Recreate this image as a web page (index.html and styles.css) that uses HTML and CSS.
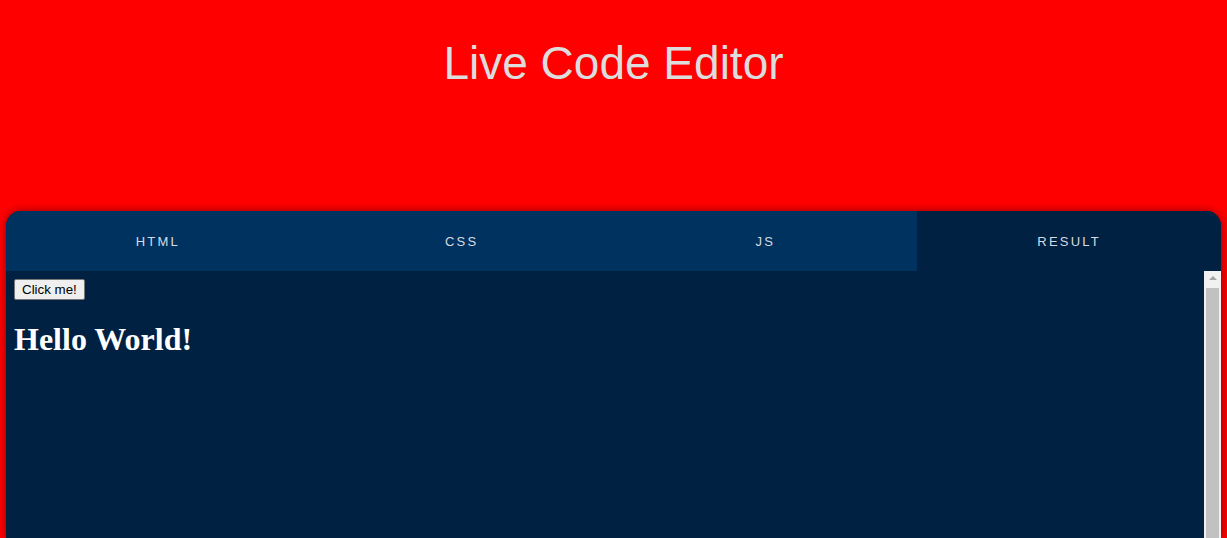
FILE: index.html
```html
<!DOCTYPE html>
<html lang="en">
<head>
<meta charset="utf-8">
<title>Live Code Editor</title>
<link rel="stylesheet" href="styles.css">
</head>
<body>
<header class="header">
  <h1 class="title">Live Code Editor</h1>
</header>
<main class="editor">
  <nav class="tabs">
    <div class="tab">HTML</div>
    <div class="tab">CSS</div>
    <div class="tab">JS</div>
    <div class="tab tab-active">RESULT</div>
  </nav>
  <section class="result">
    <div class="result-page">
      <button class="demo-btn" type="button">Click me!</button>
      <h1 class="hello">Hello World!</h1>
    </div>
    <div class="scrollbar">
      <div class="scroll-arrow"></div>
      <div class="scroll-thumb"></div>
    </div>
  </section>
</main>
</body>
</html>
```
FILE: styles.css
```css
html {
  overflow: hidden;
}
body {
  margin: 0;
  background: #ff0000;
  font-family: "Liberation Sans", Arial, sans-serif;
}
.header {
  height: 211px;
  text-align: center;
}
.title {
  margin: 0;
  padding-top: 37px;
  font-size: 46px;
  font-weight: 400;
  color: #dddddd;
  line-height: 53px;
}
.editor {
  margin: 0 6px;
  border-radius: 15px 15px 0 0;
  overflow: hidden;
  background: #002142;
  box-shadow: 0 0 8px rgba(0, 0, 0, 0.45);
}
.tabs {
  display: flex;
  height: 60px;
  background: #00325f;
}
.tab {
  flex: 1;
  display: flex;
  align-items: center;
  justify-content: center;
  font-size: 13px;
  letter-spacing: 2.2px;
  color: #d6dbe2;
}
.tab-active {
  background: #002142;
}
.result {
  display: flex;
  height: 267px;
  background: #002142;
}
.result-page {
  flex: 1;
  padding: 8px;
  font-family: "Liberation Serif", "Times New Roman", serif;
  color: #ffffff;
}
.demo-btn {
  font-family: "Liberation Sans", Arial, sans-serif;
  font-size: 13.333px;
  padding: 1px 7px;
  background: #efefef;
  color: #000;
  border: 1px solid #767676;
  border-radius: 2px;
  height: 21px;
  line-height: 15px;
}
.hello {
  margin: 21px 0;
  font-size: 32px;
  font-weight: 700;
  line-height: 37px;
}
.scrollbar {
  width: 17px;
  background: #f1f1f1;
  display: flex;
  flex-direction: column;
  align-items: center;
}
.scroll-arrow {
  margin-top: 5px;
  width: 0;
  height: 0;
  border-left: 4px solid transparent;
  border-right: 4px solid transparent;
  border-bottom: 4px solid #a3a3a3;
}
.scroll-thumb {
  margin-top: 8px;
  width: 13px;
  flex: 1;
  background: #c1c1c1;
}
```
